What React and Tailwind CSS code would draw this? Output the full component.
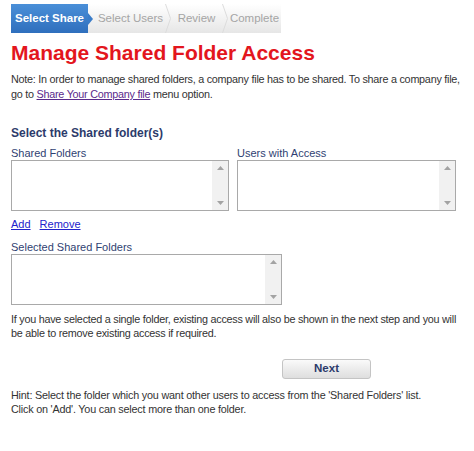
import React from 'react';

const steps = [
  { label: 'Select Users', w: 'w-[77px] pl-[8px]' },
  { label: 'Review', w: 'w-[51px]' },
  { label: 'Complete', w: 'w-[53px]' },
];

const Chevron = () => (
  <svg width="6" height="29" viewBox="0 0 6 29" className="shrink-0">
    <path d="M0.5 0 L5.5 14.5 L0.5 29" fill="none" stroke="#dcdcdc" strokeWidth="1" />
  </svg>
);

const ListBox = ({ className }) => (
  <div className={`flex h-[51px] border border-[#a9a9a9] bg-white ${className}`}>
    <div className="flex-1" />
    <div className="flex w-[16px] flex-col items-center justify-between bg-[#f1f1f1] py-[5px]">
      <svg width="7" height="4" viewBox="0 0 7 4"><path d="M0 4 L3.5 0 L7 4 Z" fill="#a3a3a3" /></svg>
      <svg width="7" height="4" viewBox="0 0 7 4"><path d="M0 0 L3.5 4 L7 0 Z" fill="#a3a3a3" /></svg>
    </div>
  </div>
);

const App = () => {
  return (
    <div className="h-[451px] w-[474px] bg-white pl-[11px] pt-[4px] font-['Liberation_Sans',Tahoma,sans-serif] text-[11px] text-[#333]">
      {/* Wizard steps */}
      <div className="flex h-[29px] w-[270px] items-center whitespace-nowrap bg-gradient-to-b from-white to-[#e6e6e6] font-['Liberation_Sans',Arial,sans-serif] text-[11.5px]">
        <div className="relative flex h-full w-[77px] shrink-0 items-center justify-center bg-gradient-to-b from-[#4a8fd8] to-[#2f6fbd] font-bold text-white">
          Select Share
          <div className="absolute right-[-5px] top-[9px] h-0 w-0 border-y-[6px] border-l-[5px] border-y-transparent border-l-[#3a7cc8]" />
        </div>
        {steps.map((s, i) => (
          <React.Fragment key={s.label}>
            <div className={`flex h-full shrink-0 items-center justify-center text-[#a5a5a5] ${s.w}`}>{s.label}</div>
            {i < steps.length - 1 && <Chevron />}
          </React.Fragment>
        ))}
      </div>

      {/* Title */}
      <h1 className="mt-[7px] font-['Liberation_Sans',Arial,sans-serif] text-[21px] font-bold leading-[26px] text-[#e3161d]">
        Manage Shared Folder Access
      </h1>

      <p className="mt-[6px] pr-[2px] text-[10.8px] leading-[15px] tracking-[-0.25px]">
        Note: In order to manage shared folders, a company file has to be shared. To share a company file, go to{' '}
        <a href="#" className="text-[#5a2a8c] underline">Share Your Company file</a> menu option.
      </p>

      <h2 className="mt-[22px] text-[12px] font-bold text-[#2c3b6b]">Select the Shared folder(s)</h2>

      <div className="mt-[4px] flex gap-[8px]">
        <div className="w-[218px]">
          <div className="leading-[14px] text-[#2f3f72]">Shared Folders</div>
          <ListBox />
        </div>
        <div className="w-[219px]">
          <div className="leading-[14px] text-[#2f3f72]">Users with Access</div>
          <ListBox />
        </div>
      </div>

      <div className="mt-[6px] flex gap-[9px] leading-[14px]">
        <a href="#" className="text-[#2222cc] underline">Add</a>
        <a href="#" className="text-[#2222cc] underline">Remove</a>
      </div>

      <div className="mt-[9px] leading-[14px] text-[#2f3f72]">Selected Shared Folders</div>
      <ListBox className="w-[271px]" />

      <p className="mt-[7px] pr-[12px] text-[10.8px] leading-[14px] tracking-[-0.25px]">
        If you have selected a single folder, existing access will also be shown in the next step and you will be able to remove existing access if required.
      </p>

      <div className="mt-[19px] flex pl-[271px]">
        <button className="h-[20px] w-[89px] rounded-[3px] border border-[#c4c4c4] bg-gradient-to-b from-[#fafafa] to-[#dedede] text-[11.5px] font-bold text-[#2c3b6b]">
          Next
        </button>
      </div>

      <p className="mt-[9px] text-[10.8px] leading-[14px] tracking-[-0.2px]">
        Hint: Select the folder which you want other users to access from the 'Shared Folders' list.
        <br />
        Click on 'Add'. You can select more than one folder.
      </p>
    </div>
  );
};

export default App;
